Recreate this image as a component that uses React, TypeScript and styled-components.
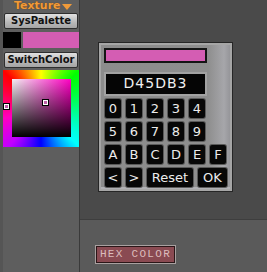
import React from 'react'
import styled, { createGlobalStyle } from 'styled-components'

const GlobalStyle = createGlobalStyle`
  html, body {
    margin: 0;
    padding: 0;
    background: #4a4a4a;
  }
  body {
    font-family: 'DejaVu Sans', Verdana, sans-serif;
  }
`

const Screen = styled.div`
  width: 267px;
  height: 272px;
  display: flex;
  overflow: hidden;
`

const SidePanel = styled.div`
  width: 80px;
  box-sizing: border-box;
  background: #5e5e5e;
  border-left: 3px solid #555555;
  border-right: 1px solid #3a3a3a;
  display: flex;
  flex-direction: column;
`

const PanelTitle = styled.div`
  height: 12px;
  padding-left: 11px;
  color: #f09a3a;
  font-weight: bold;
  font-size: 11px;
  line-height: 12px;
  display: flex;
  align-items: center;
  gap: 1px;
  text-shadow: 0 0 1px #6a3a00;
`

const Caret = styled.span`
  display: inline-block;
  width: 0;
  height: 0;
  border-left: 5px solid transparent;
  border-right: 5px solid transparent;
  border-top: 6px solid #f09a3a;
  margin-top: 1px;
`

const PanelButton = styled.div<{ $top: number }>`
  margin: ${p => p.$top}px 0 0 1px;
  width: 74px;
  height: 16px;
  box-sizing: border-box;
  border: 1px solid #2e2e2e;
  border-radius: 2px;
  background: linear-gradient(#e0e0e0, #b8b8b8 60%, #a4a4a4);
  color: #111;
  font-weight: bold;
  font-size: 10px;
  line-height: 14px;
  text-align: center;
  white-space: nowrap;
`

const SwatchRow = styled.div`
  margin-top: 3px;
  display: flex;
  gap: 2px;
  height: 16px;
`

const Swatch = styled.div<{ $color: string; $width: number }>`
  width: ${p => p.$width}px;
  background: ${p => p.$color};
`

const Picker = styled.div`
  position: relative;
  margin-top: 2px;
  width: 76px;
  height: 77px;
  box-sizing: border-box;
  padding: 9px 8px 10px 9px;
  background: conic-gradient(
    from -45deg,
    #ff0000 0deg,
    #ffff00 45deg,
    #00ff00 90deg,
    #00ffff 180deg,
    #0000ff 225deg,
    #c000ff 265deg,
    #ff00c0 300deg,
    #ff0000 360deg
  );
`

const SatValue = styled.div`
  width: 100%;
  height: 100%;
  background:
    linear-gradient(to top, #000 0%, rgba(0, 0, 0, 0) 100%),
    linear-gradient(to right, #f4f0f2 0%, #ff00c4 100%);
`

const Marker = styled.div<{ $left: number; $top: number }>`
  position: absolute;
  left: ${p => p.$left}px;
  top: ${p => p.$top}px;
  width: 7px;
  height: 7px;
  box-sizing: border-box;
  border: 1px solid #000;
  box-shadow: inset 0 0 0 1px #fff;
  background: #c060a8;
`

const Main = styled.div`
  flex: 1;
  display: flex;
  flex-direction: column;
`

const Canvas = styled.div`
  height: 220px;
  box-sizing: border-box;
  background: #4a4a4a;
  border-bottom: 1px solid #3e3e3e;
  padding: 42px 0 0 18px;
`

const Dialog = styled.div`
  width: 135px;
  height: 150px;
  box-sizing: border-box;
  border: 1px solid #262626;
  box-shadow: inset 0 0 0 2px #a6a6a6, inset 0 -3px 0 1px #b0b0b4;
  background: linear-gradient(
    to right,
    #8c8c8c 0%,
    #8e8e8e 82%,
    #a6a6aa 94%,
    #909094 100%
  );
  padding: 5px 0 0 5px;
  display: flex;
  flex-direction: column;
`

const ColorBar = styled.div<{ $color: string }>`
  width: 103px;
  height: 15px;
  box-sizing: border-box;
  border: 2px solid #141414;
  background: ${p => p.$color};
`

const HexField = styled.div`
  margin-top: 9px;
  width: 103px;
  height: 24px;
  box-sizing: border-box;
  border: 2px solid #a2a2a2;
  background: #050505;
  color: #f0f0f0;
  font-size: 14px;
  line-height: 19px;
  letter-spacing: 1px;
  text-align: center;
`

const Keypad = styled.div`
  margin: 3px 0 0 1px;
  display: flex;
  flex-direction: column;
  gap: 4px;
`

const KeyRow = styled.div`
  display: flex;
  gap: 5px;
`

const Key = styled.div<{ $width?: number }>`
  width: ${p => p.$width ?? 16}px;
  height: 19px;
  box-sizing: border-box;
  border-radius: 2px;
  background: #070707;
  box-shadow: 0 0 0 1px #5a5a5a;
  color: #ececec;
  font-size: 13px;
  line-height: 19px;
  text-align: center;
`

const Footer = styled.div`
  flex: 1;
  background: #5a5a5a;
  padding: 25px 0 0 15px;
`

const HexButton = styled.div`
  width: 81px;
  height: 19px;
  box-sizing: border-box;
  border: 1px solid #a8a0a0;
  box-shadow: inset 0 0 0 1px #2a1618;
  background: #8a4a52;
  color: #dcbcbc;
  font-family: 'Liberation Mono', 'DejaVu Sans Mono', monospace;
  font-size: 11px;
  line-height: 17px;
  letter-spacing: 1.3px;
  text-align: center;
`

const rows = [
  ['0', '1', '2', '3', '4'],
  ['5', '6', '7', '8', '9'],
  ['A', 'B', 'C', 'D', 'E', 'F']
]

export default function App() {
  const color = '#D45DB3'
  return (
    <>
      <GlobalStyle />
      <Screen>
        <SidePanel>
          <PanelTitle>
            Texture<Caret />
          </PanelTitle>
          <PanelButton $top={1}>SysPalette</PanelButton>
          <SwatchRow>
            <Swatch $color="#000" $width={18} />
            <Swatch $color={color} $width={56} />
          </SwatchRow>
          <PanelButton $top={4}>SwitchColor</PanelButton>
          <Picker>
            <SatValue />
            <Marker $left={0} $top={33} />
            <Marker $left={39} $top={29} />
          </Picker>
        </SidePanel>
        <Main>
          <Canvas>
            <Dialog>
              <ColorBar $color={color} />
              <HexField>{color.slice(1)}</HexField>
              <Keypad>
                {rows.map((row, i) => (
                  <KeyRow key={i}>
                    {row.map(k => (
                      <Key key={k}>{k}</Key>
                    ))}
                  </KeyRow>
                ))}
                <KeyRow>
                  <Key>&lt;</Key>
                  <Key>&gt;</Key>
                  <Key $width={46}>Reset</Key>
                  <Key $width={29}>OK</Key>
                </KeyRow>
              </Keypad>
            </Dialog>
          </Canvas>
          <Footer>
            <HexButton>HEX COLOR</HexButton>
          </Footer>
        </Main>
      </Screen>
    </>
  )
}
